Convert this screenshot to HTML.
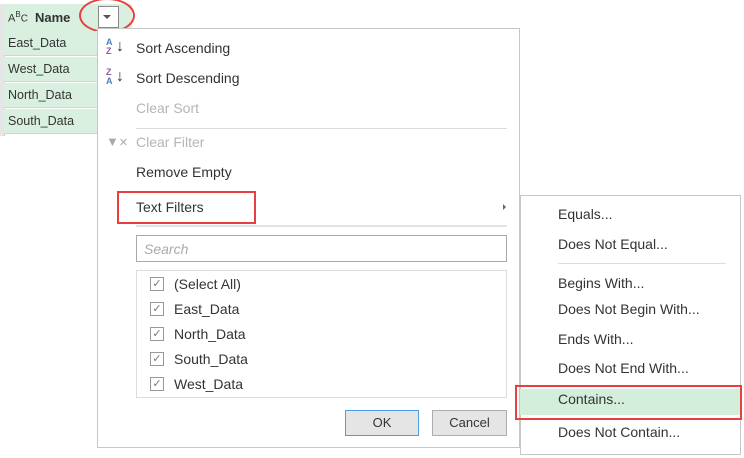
<!DOCTYPE html><html><head><style>
body{margin:0;width:744px;height:458px;background:#fff;position:relative;overflow:hidden;font-family:"Liberation Sans",sans-serif;color:#333}
.a{position:absolute}
.t{position:absolute;font-size:14px;white-space:nowrap}
.cell{position:absolute;left:4px;width:93px;height:25px;background:#d9f0e0;border-bottom:1px solid #c9d9cf;font-size:12.5px;line-height:25px;padding-left:4px;box-sizing:border-box;color:#333}
.cb{position:absolute;left:150px;width:12px;height:12px;border:1px solid #999;background:#fff;font-size:11px;line-height:12px;text-align:center;color:#777}
</style></head><body>
<div class="a" style="left:0;top:4px;width:4px;height:132px;background:#e6e6e6;border-right:1px solid #ccc"></div>
<div class="a" style="left:4px;top:4px;width:128px;height:27px;background:#d9f0e0;border-bottom:1px solid #c9d9cf"></div>
<div class="t" style="left:8px;top:10px;font-size:11px">A<sup style="font-size:8px">B</sup><span style="font-size:10px">C</span></div>
<div class="t" style="left:35px;top:10px;font-size:13px;font-weight:bold">Name</div>
<div class="a" style="left:98px;top:6px;width:19px;height:20px;border:1px solid #888;background:#fff"></div>
<div class="a" style="left:103px;top:15px;width:0;height:0;border-left:4px solid transparent;border-right:4px solid transparent;border-top:4px solid #555"></div>
<div class="a" style="left:79px;top:-2px;width:52px;height:31px;border:2px solid #e8403f;border-radius:50%"></div>
<div class="cell" style="top:31px">East_Data</div>
<div class="cell" style="top:57px">West_Data</div>
<div class="cell" style="top:83px">North_Data</div>
<div class="cell" style="top:109px">South_Data</div>
<div class="a" style="left:97px;top:28px;width:423px;height:420px;background:#fff;border:1px solid #c6c6c6;box-sizing:border-box"></div>
<div class="t" style="left:106px;top:38px;font-size:9px;line-height:9px;font-weight:bold;color:#4a7fc1">A<br><span style="color:#8a5aa8">Z</span></div><div class="t" style="left:116px;top:38px;font-size:16px">↓</div>
<div class="t" style="left:106px;top:68px;font-size:9px;line-height:9px;font-weight:bold;color:#8a5aa8">Z<br><span style="color:#4a7fc1">A</span></div><div class="t" style="left:116px;top:68px;font-size:16px">↓</div>
<div class="t" style="left:136px;top:40px">Sort Ascending</div>
<div class="t" style="left:136px;top:70px">Sort Descending</div>
<div class="t" style="left:136px;top:100px;color:#b5b5b5">Clear Sort</div>
<div class="a" style="left:136px;top:128px;width:371px;height:1px;background:#ddd"></div>
<div class="t" style="left:106px;top:134px;color:#aaa;font-size:13px">▼<span style="font-size:11px">✕</span></div>
<div class="t" style="left:136px;top:134px;color:#b5b5b5">Clear Filter</div>
<div class="t" style="left:136px;top:164px">Remove Empty</div>
<div class="t" style="left:136px;top:199px">Text Filters</div>
<div class="a" style="left:117px;top:191px;width:139px;height:33px;border:2px solid #e8403f;box-sizing:border-box"></div>
<div class="a" style="left:503px;top:204px;border-top:3px solid transparent;border-bottom:3px solid transparent;border-left:3px solid #666"></div>
<div class="a" style="left:136px;top:225px;width:371px;height:2px;background:#e2e2e6"></div>
<div class="a" style="left:136px;top:235px;width:371px;height:27px;border:1px solid #aaa;box-sizing:border-box"></div>
<div class="t" style="left:144px;top:241px;color:#aaa;font-style:italic">Search</div>
<div class="a" style="left:136px;top:270px;width:371px;height:128px;border:1px solid #ddd;box-sizing:border-box"></div>
<div class="cb" style="top:277px">✓</div><div class="t" style="left:174px;top:276px">(Select All)</div>
<div class="cb" style="top:302px">✓</div><div class="t" style="left:174px;top:301px">East_Data</div>
<div class="cb" style="top:327px">✓</div><div class="t" style="left:174px;top:326px">North_Data</div>
<div class="cb" style="top:352px">✓</div><div class="t" style="left:174px;top:351px">South_Data</div>
<div class="cb" style="top:377px">✓</div><div class="t" style="left:174px;top:376px">West_Data</div>
<div class="a" style="left:345px;top:410px;width:74px;height:26px;border:1px solid #4a9ee8;background:#e5e5e5;box-sizing:border-box;font-size:13px;text-align:center;line-height:24px">OK</div>
<div class="a" style="left:432px;top:410px;width:75px;height:26px;border:1px solid #adadad;background:#e5e5e5;box-sizing:border-box;font-size:13px;text-align:center;line-height:24px">Cancel</div>
<div class="a" style="left:520px;top:195px;width:221px;height:260px;background:#fff;border:1px solid #c6c6c6;box-sizing:border-box"></div>
<div class="t" style="left:558px;top:206px">Equals...</div>
<div class="t" style="left:558px;top:236px">Does Not Equal...</div>
<div class="a" style="left:558px;top:263px;width:168px;height:1px;background:#ddd"></div>
<div class="t" style="left:558px;top:275px">Begins With...</div>
<div class="t" style="left:558px;top:301px">Does Not Begin With...</div>
<div class="t" style="left:558px;top:331px">Ends With...</div>
<div class="t" style="left:558px;top:360px">Does Not End With...</div>
<div class="a" style="left:520px;top:389px;width:220px;height:26px;background:#d4eedc"></div>
<div class="a" style="left:515px;top:385px;width:227px;height:35px;border:2px solid #e8403f;box-sizing:border-box"></div>
<div class="t" style="left:558px;top:391px">Contains...</div>
<div class="t" style="left:558px;top:424px">Does Not Contain...</div>
</body></html>
